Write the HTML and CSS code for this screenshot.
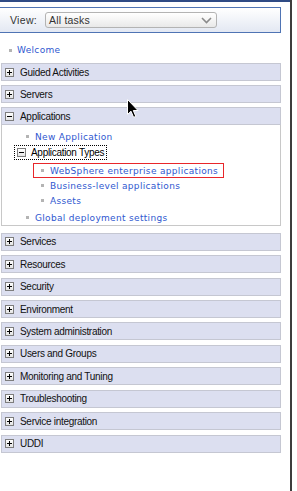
FILE: index.html
```html
<!DOCTYPE html>
<html>
<head>
<meta charset="utf-8">
<link rel="stylesheet" href="styles.css">
</head>
<body>
<div class="frame">
  <div class="panel">
    <div class="topline"></div>
    <div class="viewbar">
      <span class="view-label">View:</span>
      <div class="select">
        <span class="select-text">All tasks</span>
        <svg class="chev" width="11" height="7" viewBox="0 0 11 7"><path d="M1 1 L5.5 5.5 L10 1" fill="none" stroke="#8a8a8a" stroke-width="1.6"/></svg>
      </div>
    </div>
    <div class="welcome"><span class="bullet"></span><a class="link">Welcome</a></div>
    <div class="sections">
      <div class="hdr"><span class="tog plus"></span><span class="hdr-text">Guided Activities</span></div>
      <div class="hdr"><span class="tog plus"></span><span class="hdr-text">Servers</span></div>
      <div class="group">
        <div class="hdr open"><span class="tog minus"></span><span class="hdr-text">Applications</span></div>
        <div class="body">
          <div class="item lvl1 first"><span class="bullet"></span><a class="link">New Application</a></div>
          <div class="item types"><span class="tog minus"></span><span class="types-text">Application Types</span></div>
          <div class="item lvl2 selected"><span class="bullet"></span><a class="link">WebSphere enterprise applications</a></div>
          <div class="item lvl2"><span class="bullet"></span><a class="link">Business-level applications</a></div>
          <div class="item lvl2"><span class="bullet"></span><a class="link">Assets</a></div>
          <div class="item lvl1 last"><span class="bullet"></span><a class="link">Global deployment settings</a></div>
        </div>
      </div>
      <div class="hdr"><span class="tog plus"></span><span class="hdr-text">Services</span></div>
      <div class="hdr"><span class="tog plus"></span><span class="hdr-text">Resources</span></div>
      <div class="hdr"><span class="tog plus"></span><span class="hdr-text">Security</span></div>
      <div class="hdr"><span class="tog plus"></span><span class="hdr-text">Environment</span></div>
      <div class="hdr"><span class="tog plus"></span><span class="hdr-text">System administration</span></div>
      <div class="hdr"><span class="tog plus"></span><span class="hdr-text">Users and Groups</span></div>
      <div class="hdr"><span class="tog plus"></span><span class="hdr-text">Monitoring and Tuning</span></div>
      <div class="hdr"><span class="tog plus"></span><span class="hdr-text">Troubleshooting</span></div>
      <div class="hdr"><span class="tog plus"></span><span class="hdr-text">Service integration</span></div>
      <div class="hdr"><span class="tog plus"></span><span class="hdr-text">UDDI</span></div>
    </div>
  </div>
  <div class="divider"></div>
  <svg class="cursor" width="13" height="20" viewBox="0 0 13 20"><path d="M0.5 0.5 L0.5 15.5 L4 12.2 L6.6 18.3 L8.8 17.4 L6.3 11.5 L11 11.5 Z" fill="#000" stroke="#fff" stroke-width="1"/></svg>
</div>
</body>
</html>
```

FILE: styles.css
```css
html, body {
  margin: 0;
  padding: 0;
  background: #ffffff;
}
.frame {
  position: relative;
  display: flex;
  width: 297px;
  height: 491px;
  overflow: hidden;
}
.panel {
  width: 290px;
  display: flex;
  flex-direction: column;
}
.topline {
  height: 2px;
  background: #2f4b85;
}
.viewbar {
  margin-top: 5px;
  height: 24px;
  border: 1px solid #4f74b4;
  border-left: none;
  background: linear-gradient(#ffffff, #e3e8f3);
  display: flex;
  align-items: center;
  padding-left: 10px;
  box-sizing: content-box;
  width: 270px;
}
.view-label {
  font-family: "Liberation Sans", Arial, sans-serif;
  font-size: 10.5px;
  color: #333;
  letter-spacing: 0.3px;
}
.select {
  margin-left: 8px;
  height: 14px;
  border: 1px solid #b3b3b3;
  border-radius: 3px;
  background: linear-gradient(#ffffff, #e9e9e9);
  display: flex;
  align-items: center;
  justify-content: space-between;
  padding: 0 4px 0 3px;
  box-sizing: content-box;
  width: 163px;
}
.select-text {
  font-family: "Liberation Sans", Arial, sans-serif;
  font-size: 10.5px;
  color: #333;
  letter-spacing: 0.2px;
}
.chev { display: block; }
.welcome {
  margin-top: 10px;
  height: 14px;
  display: flex;
  align-items: center;
  padding-left: 9px;
}
.bullet {
  width: 3px;
  height: 3px;
  background: #b4b4b4;
  flex: none;
}
.link {
  font-family: "DejaVu Sans", Verdana, sans-serif;
  font-size: 9px;
  letter-spacing: 0.32px;
  color: #2f58d0;
}
.welcome .link { margin-left: 5px; }
.sections {
  margin-top: 6px;
  margin-left: 1px;
  width: 280px;
  display: flex;
  flex-direction: column;
  gap: 4px;
}
.hdr {
  height: 16px;
  border: 1px solid #c5c7d2;
  background: #dcdff0;
  display: flex;
  align-items: center;
  padding-left: 3px;
  flex: none;
}
.group ~ .hdr { margin-top: 0.45px; }
.hdr-text {
  font-family: "Liberation Sans", Arial, sans-serif;
  font-size: 10px;
  letter-spacing: -0.3px;
  color: #111;
  margin-left: 6px;
}
.tog {
  position: relative;
  width: 7px;
  height: 7px;
  border: 1px solid #7d7d7d;
  background: linear-gradient(#ffffff, #e4e4e4);
  flex: none;
}
.tog::before {
  content: "";
  position: absolute;
  left: 1px;
  top: 3px;
  width: 5px;
  height: 1px;
  background: #000;
}
.plus::after {
  content: "";
  position: absolute;
  left: 3px;
  top: 1px;
  width: 1px;
  height: 5px;
  background: #000;
}
.group {
  display: flex;
  flex-direction: column;
  margin-bottom: 2.25px;
}
.body {
  border: 1px solid #c8c8c8;
  border-top: none;
  background: #fff;
  padding: 4px 0 0 0;
  display: flex;
  flex-direction: column;
}
.item {
  height: 15px;
  display: flex;
  align-items: center;
  box-sizing: border-box;
}
.lvl1 { padding-left: 24px; }
.lvl1 .link { margin-left: 6px; }
.first { margin-bottom: 1px; }
.last { margin-top: 2px; }
.types {
  margin-left: 12px;
  width: 93px;
  border: 1px dotted #000;
  padding-left: 2px;
  margin-bottom: 3px;
}
.types-text {
  font-family: "Liberation Sans", Arial, sans-serif;
  font-size: 10px;
  letter-spacing: -0.3px;
  color: #000;
  margin-left: 5px;
}
.lvl2 { padding-left: 39px; }
.lvl2 .link { margin-left: 6px; }
.selected {
  margin-left: 31px;
  width: 191px;
  padding-left: 7px;
  border: 1px solid #e8262a;
}
.divider {
  width: 2px;
  height: 491px;
  background: #3d3d3d;
}
.cursor {
  position: absolute;
  left: 127px;
  top: 99px;
}
```
